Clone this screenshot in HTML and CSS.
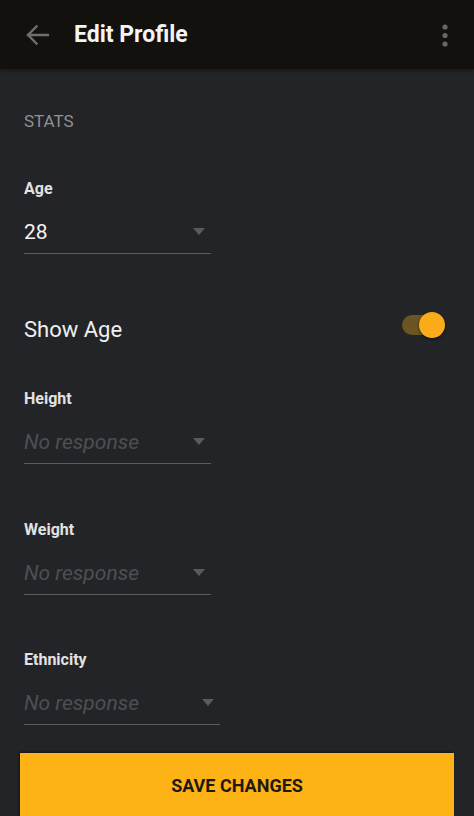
FILE: index.html
```html
<!DOCTYPE html>
<html lang="en">
<head>
<meta charset="utf-8">
<title>Edit Profile</title>
<link rel="stylesheet" href="styles.css">
</head>
<body>
<div class="screen">
  <header class="appbar">
    <svg class="back" width="24" height="22" viewBox="0 0 24 22" aria-hidden="true">
      <path d="M23 11H3M11.5 2.5L3 11l8.5 8.5" fill="none" stroke="#6f6f6f" stroke-width="2.3" stroke-linecap="square"/>
    </svg>
    <h1 class="title">Edit Profile</h1>
    <svg class="more" width="6" height="24" viewBox="0 0 6 24" aria-hidden="true">
      <circle cx="3" cy="3" r="2.6" fill="#676767"/>
      <circle cx="3" cy="11.5" r="2.6" fill="#676767"/>
      <circle cx="3" cy="20" r="2.6" fill="#676767"/>
    </svg>
  </header>

  <main class="content">
    <div class="section">STATS</div>

    <div class="field field-first">
      <div class="label">Age</div>
      <div class="select">
        <span class="value">28</span>
        <span class="caret"></span>
      </div>
    </div>

    <div class="switch-row">
      <span class="switch-label">Show Age</span>
      <span class="toggle">
        <span class="track"></span>
        <span class="thumb"></span>
      </span>
    </div>

    <div class="field field-after-switch">
      <div class="label">Height</div>
      <div class="select">
        <span class="value placeholder">No response</span>
        <span class="caret"></span>
      </div>
    </div>

    <div class="field">
      <div class="label">Weight</div>
      <div class="select">
        <span class="value placeholder">No response</span>
        <span class="caret"></span>
      </div>
    </div>

    <div class="field field-last">
      <div class="label">Ethnicity</div>
      <div class="select select-wide">
        <span class="value placeholder">No response</span>
        <span class="caret"></span>
      </div>
    </div>

    <button class="save" type="button">SAVE CHANGES</button>
  </main>
</div>
</body>
</html>
```

FILE: styles.css
```css
html, body {
  margin: 0;
  padding: 0;
  height: 816px;
  overflow: hidden;
  background: #232428;
}

body {
  font-family: Roboto, "Noto Sans", "Liberation Sans", sans-serif;
  color: #e4e4e4;
}

.screen {
  width: 474px;
  height: 816px;
  display: flex;
  flex-direction: column;
  background: #232428;
}

.appbar {
  height: 69px;
  flex: 0 0 auto;
  background: #12110d;
  border-bottom: 1px solid #1d1a12;
  display: flex;
  align-items: center;
  padding: 0 26px 0 25px;
  box-shadow: 0 1px 3px rgba(0, 0, 0, 0.35);
}

.back {
  display: block;
  flex: 0 0 auto;
}

.title {
  margin: 0 0 0 25px;
  font-size: 23px;
  font-weight: 700;
  color: #f4f4f4;
  line-height: 28px;
  flex: 1 1 auto;
}

.more {
  display: block;
  margin-top: 2px;
}

.content {
  padding: 41px 24px 0 24px;
  display: flex;
  flex-direction: column;
}

.section {
  font-size: 17px;
  line-height: 20px;
  color: #909195;
}

.field {
  display: flex;
  flex-direction: column;
  margin-top: 56px;
}

.field-first {
  margin-top: 48px;
}

.field-after-switch {
  margin-top: 44px;
}

.field-last {
  margin-top: 55px;
}

.label {
  font-size: 16px;
  font-weight: 700;
  line-height: 20px;
  color: #e2e2e2;
}

.select {
  margin-top: 19px;
  width: 187px;
  height: 28px;
  padding-bottom: 7px;
  border-bottom: 1px solid #5c5d61;
  display: flex;
  align-items: center;
  justify-content: space-between;
}

.select-wide {
  width: 196px;
}

.value {
  font-size: 21px;
  line-height: 28px;
  color: #f2f2f2;
}

.placeholder {
  font-style: italic;
  color: #4e4f53;
}

.caret {
  width: 0;
  height: 0;
  border-left: 6px solid transparent;
  border-right: 6px solid transparent;
  border-top: 7px solid #5a5b5f;
  margin-right: 6px;
  margin-top: -1px;
}

.switch-row {
  margin-top: 61px;
  display: flex;
  align-items: flex-start;
  justify-content: space-between;
}

.switch-label {
  font-size: 22px;
  line-height: 30px;
  color: #f0f0f0;
}

.toggle {
  position: relative;
  width: 43px;
  height: 26px;
  margin-top: -3px;
  margin-right: 5px;
}

.track {
  position: absolute;
  left: 0;
  top: 3px;
  width: 36px;
  height: 20px;
  border-radius: 10px;
  background: #6b5522;
}

.thumb {
  position: absolute;
  right: 0;
  top: 0;
  width: 26px;
  height: 26px;
  border-radius: 50%;
  background: #f9ab19;
  box-shadow: 0 1px 3px rgba(0, 0, 0, 0.6);
}

.save {
  margin: 28px -4px 0 -4px;
  height: 66px;
  border: none;
  background: #fdb216;
  color: #1f1a10;
  font-family: Roboto, "Noto Sans", "Liberation Sans", sans-serif;
  font-size: 18px;
  font-weight: 700;
  padding: 0 0 2px 0;
  box-shadow: -1px -1px 2px rgba(0, 0, 0, 0.45);
  cursor: pointer;
}
```
